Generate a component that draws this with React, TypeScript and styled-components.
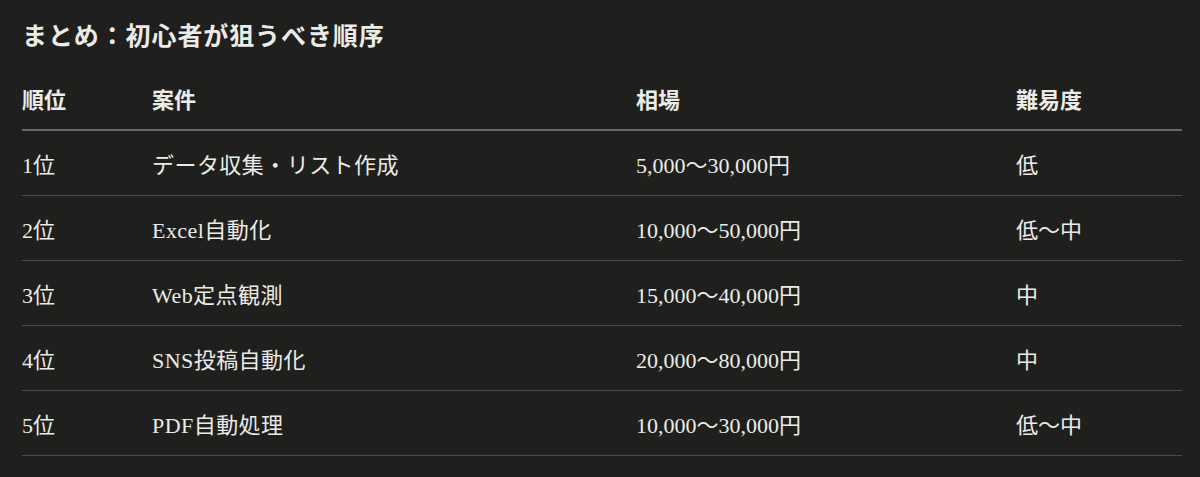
import React from "react";
import styled, { createGlobalStyle } from "styled-components";

const GlobalStyle = createGlobalStyle`
  html, body {
    margin: 0;
    background: #1f201e;
  }
`;

const rows = [
  { rank: "1位", job: "データ収集・リスト作成", price: "5,000〜30,000円", level: "低" },
  { rank: "2位", job: "Excel自動化", price: "10,000〜50,000円", level: "低〜中" },
  { rank: "3位", job: "Web定点観測", price: "15,000〜40,000円", level: "中" },
  { rank: "4位", job: "SNS投稿自動化", price: "20,000〜80,000円", level: "中" },
  { rank: "5位", job: "PDF自動処理", price: "10,000〜30,000円", level: "低〜中" },
];

const App = () => {
  return (
    <>
      <GlobalStyle />
      <Wrapper>
        <Title>まとめ：初心者が狙うべき順序</Title>
        <Table>
          <colgroup>
            <col style={{ width: 130 }} />
            <col style={{ width: 484 }} />
            <col style={{ width: 380 }} />
            <col />
          </colgroup>
          <thead>
            <tr>
              <Th>順位</Th>
              <Th>案件</Th>
              <Th>相場</Th>
              <Th>難易度</Th>
            </tr>
          </thead>
          <tbody>
            {rows.map((r) => (
              <tr key={r.rank}>
                <Td>{r.rank}</Td>
                <Td $wide>{r.job}</Td>
                <Td>{r.price}</Td>
                <Td>{r.level}</Td>
              </tr>
            ))}
          </tbody>
        </Table>
      </Wrapper>
    </>
  );
};

export default App;

const Wrapper = styled.div`
  padding: 16px 18px 0 22px;
  color: #ebebe8;
  font-family: "Liberation Serif", "Noto Sans CJK JP", serif;
`;

const Title = styled.h2`
  margin: 0 0 13px;
  font-family: "Noto Sans CJK JP", sans-serif;
  font-size: 25px;
  font-weight: 700;
  line-height: 37px;
  letter-spacing: 0.9px;
`;

const Table = styled.table`
  width: 1160px;
  border-collapse: collapse;
  table-layout: fixed;
`;

const Th = styled.th`
  height: 63px;
  padding: 0;
  text-align: left;
  font-family: "Noto Sans CJK JP", sans-serif;
  font-size: 22px;
  font-weight: 700;
  border-bottom: 2px solid #686866;
`;

const Td = styled.td<{ $wide?: boolean }>`
  height: 64px;
  padding: 0;
  font-size: 22px;
  font-weight: 400;
  letter-spacing: ${(p) => (p.$wide ? "0.45px" : "0")};
  border-bottom: 1px solid #4a4a48;
`;
